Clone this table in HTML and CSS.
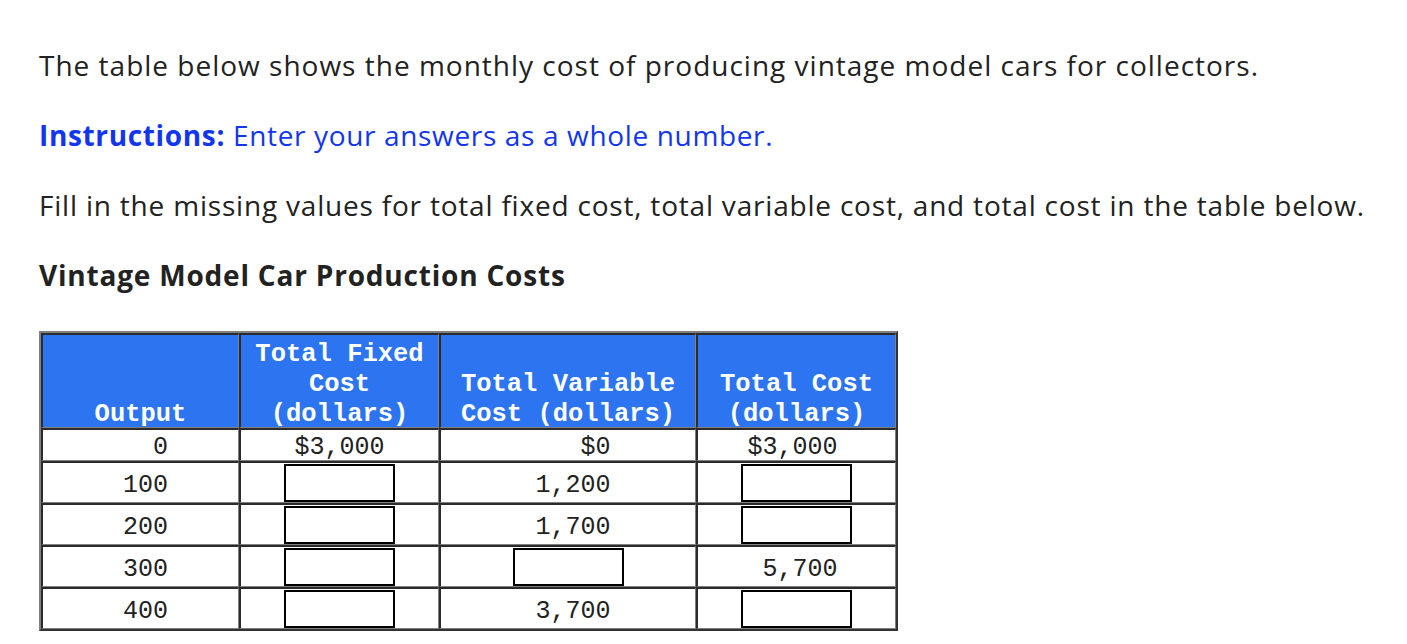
FILE: index.html
```html
<!DOCTYPE html>
<html>
<head>
<meta charset="utf-8">
<link rel="stylesheet" href="styles.css">
</head>
<body>
<p class="para intro">The table below shows the monthly cost of producing vintage model cars for collectors.</p>
<p class="para instr"><strong>Instructions:</strong> Enter your answers as a whole number.</p>
<p class="para">Fill in the missing values for total fixed cost, total variable cost, and total cost in the table below.</p>
<h3 class="para heading">Vintage Model Car Production Costs</h3>
<table class="cost-table">
  <thead>
    <tr>
      <th class="c1"><span class="hd">Output</span></th>
      <th class="c2"><span class="hd">Total Fixed<br>Cost<br>(dollars)</span></th>
      <th class="c3"><span class="hd">Total Variable<br>Cost (dollars)</span></th>
      <th class="c4"><span class="hd">Total Cost<br>(dollars)</span></th>
    </tr>
  </thead>
  <tbody>
    <tr class="first">
      <td><span class="num w3">0</span></td>
      <td><span class="num w6">$3,000</span></td>
      <td><span class="num w5">$0</span></td>
      <td><span class="num w6 last">$3,000</span></td>
    </tr>
    <tr>
      <td><span class="num w3">100</span></td>
      <td><input class="box" type="text"></td>
      <td><span class="num w5">1,200</span></td>
      <td><input class="box" type="text"></td>
    </tr>
    <tr>
      <td><span class="num w3">200</span></td>
      <td><input class="box" type="text"></td>
      <td><span class="num w5">1,700</span></td>
      <td><input class="box" type="text"></td>
    </tr>
    <tr>
      <td><span class="num w3">300</span></td>
      <td><input class="box" type="text"></td>
      <td><input class="box" type="text"></td>
      <td><span class="num w6 last">5,700</span></td>
    </tr>
    <tr>
      <td><span class="num w3">400</span></td>
      <td><input class="box" type="text"></td>
      <td><span class="num w5">3,700</span></td>
      <td><input class="box" type="text"></td>
    </tr>
  </tbody>
</table>
</body>
</html>
```

FILE: styles.css
```css
html, body {
  margin: 0;
  padding: 0;
  background: #ffffff;
}
body {
  padding: 47px 0 0 39px;
  font-family: "Open Sans", "Noto Sans", sans-serif;
  color: #222222;
}
.para {
  margin: 0 0 34px 0;
  font-size: 28px;
  line-height: 36px;
  font-weight: 400;
  letter-spacing: 0.8px;
  white-space: nowrap;
}
.intro {
  letter-spacing: 1px;
}
.instr {
  color: #1236f0;
  letter-spacing: 0.65px;
}
.instr strong {
  font-weight: 700;
}
.heading {
  font-weight: 700;
  margin-bottom: 38px;
}
.cost-table {
  border-collapse: separate;
  border-spacing: 0;
  border-style: solid;
  border-width: 2px;
  border-color: #808080 #333333 #333333 #808080;
  font-family: "Liberation Mono", "Courier New", monospace;
}
.cost-table th,
.cost-table td {
  box-sizing: border-box;
  border-style: solid;
  border-width: 2px 1px 1px 2px;
  border-color: #2b2b2b #808080 #808080 #2b2b2b;
  padding: 0;
  text-align: center;
}
.cost-table th {
  background: #2d74f1;
  color: #ffffff;
  font-size: 25.5px;
  font-weight: 700;
  line-height: 30px;
  vertical-align: bottom;
  height: 95px;
}
.hd {
  position: relative;
  top: 3px;
}
.c1 { width: 198px; }
.c2 { width: 200px; }
.c3 { width: 257px; }
.c4 { width: 200px; }
.cost-table td {
  font-size: 25px;
  color: #222222;
  height: 42px;
  line-height: 30px;
  vertical-align: middle;
}
.cost-table tr.first td {
  height: 33px;
}
.num {
  display: inline-block;
  text-align: right;
  position: relative;
  top: 3px;
}
.w3 { width: 45px; padding-left: 10px; }
.w5 { width: 75px; padding-left: 10px; }
.w6 { width: 90px; }
.w6.last { padding-right: 8px; }
.box {
  display: block;
  box-sizing: border-box;
  width: 111px;
  height: 38px;
  margin: 0 auto;
  border: 2px solid #000000;
  background: #ffffff;
  padding: 0;
}
```
